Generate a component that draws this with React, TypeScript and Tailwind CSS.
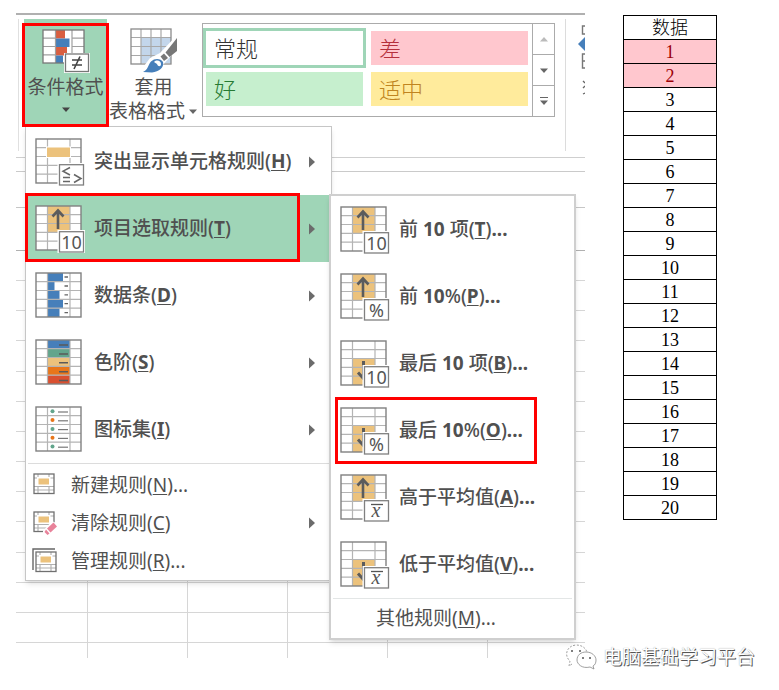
import type { ReactNode } from "react";

const GRAY = "#808080";
const LINE = "#b4b4b4";
const GOLD = "#ecc27c";

const Grid = ({ children, over }: { children?: ReactNode; over?: ReactNode }) => (
  <svg width="50" height="48" viewBox="0 0 50 48" className="shrink-0" aria-hidden="true">
    <rect x="1" y="1" width="45" height="44" fill="#fff" />
    {children}
    <path d="M12.5 1V45M35 1V45M1 9.7H46M1 18.5H46M1 27.3H46M1 36.2H46" stroke={LINE} strokeWidth="1.2" fill="none" />
    <rect x="1" y="1" width="45" height="44" fill="none" stroke={GRAY} strokeWidth="1.4" />
    {over}
  </svg>
);

const Badge = ({ children }: { children: ReactNode }) => (
  <>
    <rect x="22.5" y="25" width="27.5" height="23" fill="#fff" />
    <rect x="24.5" y="26.7" width="24" height="20.3" fill="#fff" stroke={GRAY} strokeWidth="1.3" />
    {children}
  </>
);

const BadgeText = ({ text }: { text: string }) =>
  text === "x" ? (
    <>
      <text x="36" y="43" fontSize="20" fontStyle="italic" textAnchor="middle" fill="#555" fontFamily="Liberation Serif, serif">
        x
      </text>
      <path d="M31 30.5H43" stroke="#555" strokeWidth="1.3" />
    </>
  ) : (
    <text x="36.5" y="43.5" fontSize="18" textAnchor="middle" fill="#555" fontFamily="Noto Sans, sans-serif">
      {text}
    </text>
  );

const RankIcon = ({ dir, text }: { dir: "up" | "down"; text: string }) => (
  <Grid
    over={
      <>
        {dir === "up" ? (
          <path d="M23 24V6M17.5 11.5L23 5.5L28.5 11.5" stroke="#5c5c5c" strokeWidth="2.6" fill="none" />
        ) : (
          <path d="M23.5 21V39M18 32.500L23.5 38.500L29 32.500" stroke="#5c5c5c" strokeWidth="3" fill="none" />
        )}
        <Badge>
          <BadgeText text={text} />
        </Badge>
      </>
    }
  >
    <rect x="12.5" y={dir === "up" ? 1 : 19} width="22.5" height="26" fill={GOLD} />
  </Grid>
);

const HighlightIcon = () => (
  <Grid
    over={
      <>
        <rect x="11" y="8.5" width="25" height="11.5" fill="#fff" />
        <rect x="12" y="9.5" width="23" height="9.5" fill={GOLD} />
        <Badge>
          <path d="M35 29.5L28 33.2L35 37M28 39.5H35M28 43.5H35M39 36.5L46 40.5L39 44.5" stroke="#666" strokeWidth="1.5" fill="none" />
        </Badge>
      </>
    }
  />
);

const DataBarIcon = () => (
  <Grid over={<path d="M29.5 5H33M29.5 14H33M29.5 22.8H33M29.5 31.7H33M29.5 40.6H33" stroke="#666" strokeWidth="1.3" />}>
    {[15.5, 7, 12, 15.5, 12].map((w, i) => (
      <rect key={i} x="12.5" y={1 + i * 8.8} width={w} height="8.8" fill="#467fba" />
    ))}
  </Grid>
);

const ColorScaleIcon = () => (
  <Grid over={<path d="M24 6H33M24 15H33M24 23.8H33M24 32.7H33M24 41.5H33" stroke="#5a5a5a" strokeWidth="1.6" />}>
    {["#467fba", "#62a58c", "#ecc27c", "#e8761a", "#d95030"].map((c, i) => (
      <rect key={c} x="12.5" y={1 + i * 8.8} width="22.5" height="8.8" fill={c} />
    ))}
  </Grid>
);

const IconSetIcon = () => (
  <Grid
    over={["#62a58c", "#e8761a", "#62a58c", "#e8761a", "#62a58c"].map((c, i) => (
      <g key={i}>
        <circle cx="17.5" cy={5.3 + i * 8.8} r="2" fill={c} />
        <path d={`M23 ${6 + i * 8.8}H33`} stroke="#777" strokeWidth="1.2" />
      </g>
    ))}
  />
);

const SmallIcon = ({ kind }: { kind: "new" | "clear" | "manage" }) => (
  <svg width="26" height="26" viewBox="0 0 26 26" className="shrink-0" aria-hidden="true">
    {kind === "manage" && <path d="M1 22V1H23" stroke="#666" strokeWidth="1.4" fill="none" />}
    <g transform={kind === "manage" ? "translate(2 2)" : undefined}>
      <path d="M6 2V22M17 2V22M2 6H22M2 14.5H22M2 18H22" stroke="#b0b0b0" strokeWidth="1.1" />
      <rect x="2" y="2" width="20" height="19.5" fill="none" stroke="#707070" strokeWidth="1.3" />
      <rect x="5" y="5" width="13.5" height="9" fill="#fff" />
      <rect x="6.5" y="6.5" width="10.5" height="6" fill={GOLD} />
    </g>
    {kind === "clear" && (
      <>
        <path d="M11 21L20 11L26 14L24 26H11Z" fill="#fff" />
        <path d="M15 18.5L21.5 12.5L25 16.5L18.5 22.5Z" fill="#e8829a" />
        <path d="M14 19.5L17.5 23.5L15.5 25L12.5 22Z" fill="#e8829a" />
      </>
    )}
  </svg>
);

const ConditionalIcon = () => (
  <svg width="48" height="46" viewBox="0 0 48 46" aria-hidden="true">
    <rect x="1" y="2" width="41" height="33" fill="#fff" />
    <rect x="14" y="2" width="9" height="8.5" fill="#d95f41" />
    <rect x="14" y="10.5" width="13.5" height="8.5" fill="#467fba" />
    <rect x="14" y="19" width="11" height="8.5" fill="#d95f41" />
    <rect x="14" y="27.5" width="7" height="7.5" fill="#467fba" />
    <path d="M13.5 2V35M30 2V35M1 10.2H14M1 18.5H14M1 26.8H14M30 10.2H42M30 18.5H42" stroke="#a0a0a0" strokeWidth="1.2" />
    <rect x="1" y="2" width="41" height="33" fill="none" stroke="#777" strokeWidth="1.3" />
    <rect x="22" y="25" width="26" height="20" fill="#fff" />
    <rect x="23.5" y="26" width="23" height="17.5" fill="#fff" stroke="#777" strokeWidth="1.3" />
    <path d="M30 32H40M30 37H40M38 28.5L32 41" stroke="#444" strokeWidth="1.6" />
  </svg>
);

const TableStyleIcon = () => (
  <svg width="48" height="46" viewBox="0 0 48 46" aria-hidden="true">
    <rect x="11" y="10" width="30" height="25" fill="#c3d6eb" />
    <path d="M11 1V36M21 1V36M31 1V36M1 9.5H41M1 18.5H41M1 27.5H41" stroke="#a8a8a8" strokeWidth="1.2" />
    <rect x="1" y="1" width="40" height="35" fill="none" stroke="#8a8a8a" strokeWidth="1.3" />
    <path d="M48 6V20L32 38L22 46H8L20 30L30 25Z" fill="#fff" />
    <path d="M47 10V23L39.5 29L35.5 24.5Z" fill="#777" />
    <path d="M34 25.5L38 30L34 33L30.5 28.5Z" fill="#777" />
    <path d="M13 44C18 42 18 37 21 33.5C25 29.5 31 30.5 33 34C34.5 39 29 44 22 44.5Z" fill="#467fba" />
    <path d="M24 34C27 31 31 33 31 36C31 39 28 39 27 36Z" fill="#fff" />
  </svg>
);

const Down = ({ color }: { color: string }) => (
  <svg width="8" height="5" viewBox="0 0 8 5" aria-hidden="true">
    <path d="M0 0.5H8L4 5Z" fill={color} />
  </svg>
);

const SubArrow = () => (
  <svg width="6" height="12" viewBox="0 0 6 12" className="mr-4 ml-auto" aria-hidden="true">
    <path d="M0 0.5V11.5L6 6Z" fill="#6b6b6b" />
  </svg>
);

type LabelProps = { text: string; hotkey: string; tail?: string; bold?: boolean };

const Label = ({ text, hotkey, tail = "", bold }: LabelProps) => (
  <span className={bold ? "font-medium" : ""}>
    {text.split(/(10)/).map((part, i) => (part === "10" ? <b key={i}>10</b> : part))}(
    <span className={bold ? "font-bold underline underline-offset-2" : "underline underline-offset-2"}>{hotkey}</span>)
    {tail && <span className={bold ? "font-bold" : ""}>{tail}</span>}
  </span>
);

const topBottomRules = [
  { text: "前 10 项", hotkey: "T", dir: "up", badge: "10" },
  { text: "前 10%", hotkey: "P", dir: "up", badge: "%" },
  { text: "最后 10 项", hotkey: "B", dir: "down", badge: "10" },
  { text: "最后 10%", hotkey: "O", dir: "down", badge: "%", marked: true },
  { text: "高于平均值", hotkey: "A", dir: "up", badge: "x" },
  { text: "低于平均值", hotkey: "V", dir: "down", badge: "x" },
] as const;

const ruleMenus = [
  { text: "突出显示单元格规则", hotkey: "H", icon: <HighlightIcon /> },
  { text: "项目选取规则", hotkey: "T", icon: <RankIcon dir="up" text="10" />, open: true },
  { text: "数据条", hotkey: "D", icon: <DataBarIcon /> },
  { text: "色阶", hotkey: "S", icon: <ColorScaleIcon /> },
  { text: "图标集", hotkey: "I", icon: <IconSetIcon /> },
];

const ruleActions = [
  { text: "新建规则", hotkey: "N", tail: "...", kind: "new" },
  { text: "清除规则", hotkey: "C", kind: "clear", sub: true },
  { text: "管理规则", hotkey: "R", tail: "...", kind: "manage" },
] as const;

const SubMenu = () => (
  <ul className="absolute -top-px left-[303px] z-10 w-[247px] border-2 border-[#cfcfcf] bg-white shadow-md">
    {topBottomRules.map((rule) => (
      <li key={rule.hotkey} className="relative">
        <button className="flex h-[67px] w-full items-center gap-[9px] pl-[9px] text-left">
          <RankIcon dir={rule.dir} text={rule.badge} />
          <Label text={rule.text} hotkey={rule.hotkey} tail="..." bold />
        </button>
        {"marked" in rule && <span className="pointer-events-none absolute inset-y-0 left-1 w-[202px] border-3 border-[#ff0000]" />}
      </li>
    ))}
    <li className="mx-0.5 border-t border-[#e3e6e6]">
      <button className="h-[39px] w-full pl-[43px] text-left">
        <Label text="其他规则" hotkey="M" tail="..." />
      </button>
    </li>
  </ul>
);

const Menu = () => (
  <ul className="absolute top-[113px] left-[9px] w-[307px] border border-[#c6c6c6] bg-white pt-px shadow-md">
    {ruleMenus.map((item) => (
      <li key={item.hotkey} className="relative">
        <button className={`flex h-[67px] w-full items-center gap-[9px] pl-[9px] text-left ${item.open ? "bg-[#9fd5b7]" : ""}`}>
          {item.icon}
          <Label text={item.text} hotkey={item.hotkey} bold />
          <SubArrow />
        </button>
        {item.open && (
          <>
            <span className="pointer-events-none absolute -top-0.5 bottom-0 -left-px w-[275px] border-3 border-[#ff0000]" />
            <SubMenu />
          </>
        )}
      </li>
    ))}
    <li className="mx-0.5 mb-0.5 border-t border-[#dcdcdc]" />
    {ruleActions.map((item) => (
      <li key={item.hotkey}>
        <button className="flex h-[38px] w-full items-center gap-[13px] pl-1.5 text-left">
          <SmallIcon kind={item.kind} />
          <Label text={item.text} hotkey={item.hotkey} tail={"tail" in item ? item.tail : ""} />
          {"sub" in item && <SubArrow />}
        </button>
      </li>
    ))}
  </ul>
);

const Ribbon = () => (
  <div className="flex h-[145px] items-start overflow-hidden border-t-2 border-b border-t-[#b0b0b0] border-b-[#cfcfcf]">
    <div className="mt-1 ml-0.5 h-[132px] border-l border-[#e0e0e0]" />
    <button className="relative z-20 mt-1 ml-[5px] flex h-[107px] w-[83px] flex-col items-center bg-[#9fd5b7] pt-[9px]">
      <ConditionalIcon />
      <span className="mt-px leading-6">条件格式</span>
      <span className="mt-2">
        <Down color="#444" />
      </span>
      <span className="absolute top-1 -right-0.5 -bottom-px -left-0.5 border-3 border-[#ff0000]" />
    </button>
    <button className="mt-1 ml-0.5 flex w-[93px] flex-col items-center pt-[9px]">
      <span className="flex flex-col items-center pr-1">
        <TableStyleIcon />
        <span className="mt-px leading-6">套用</span>
      </span>
      <span className="flex w-full items-center gap-1 leading-6">
        表格格式
        <Down color="#666" />
      </span>
    </button>
    <div className="mt-2 flex h-[94px] min-w-0 flex-1 border border-[#ababab]">
      <div className="grid flex-1 grid-cols-2 grid-rows-[34px_34px] gap-x-2 gap-y-[7px] pt-[7px] pr-1 pl-[3px] text-[22px] leading-[30px] font-light [&>button]:pl-2 [&>button]:text-left">
        <button className="bg-white text-[#333] outline-3 outline-[#9fd5b7]">常规</button>
        <button className="bg-[#ffc7ce] text-[#b5303c]">差</button>
        <button className="bg-[#c6efce] text-[#267a32]">好</button>
        <button className="bg-[#ffeb9c] text-[#c08420]">适中</button>
      </div>
      <div className="flex w-[22px] flex-col divide-y divide-[#ababab] border-l border-[#ababab]">
        <button aria-label="上一行" className="flex flex-1 items-center justify-center">
          <span className="rotate-180">
            <Down color="#bbb" />
          </span>
        </button>
        <button aria-label="下一行" className="flex flex-1 items-center justify-center">
          <Down color="#666" />
        </button>
        <button aria-label="更多样式" className="flex flex-1 flex-col items-center justify-center gap-0.5">
          <span className="w-2 border-t border-[#666]" />
          <Down color="#666" />
        </button>
      </div>
    </div>
    <div className="mt-1 ml-2.5 h-[132px] border-l border-[#dcdcdc]" />
    <svg width="7" height="76" viewBox="0 0 7 76" className="mt-[9px] ml-3 shrink-0" aria-hidden="true">
      <path d="M8 2H4.5V10H8M8 30H4.5V44H8M4.5 37H8" stroke="#777" strokeWidth="1.4" fill="none" />
      <path d="M0 20L7 13V27Z" fill="#467fba" />
      <path d="M5 57L7 59M5 64L7 62M5 70L7 69" stroke="#666" strokeWidth="1.3" />
    </svg>
  </div>
);

const SheetRow = ({ size }: { size: string }) => (
  <div className={`grid grid-cols-[72px_repeat(4,100px)_1fr] divide-x divide-[#d6d6d6] ${size}`}>
    {[0, 1, 2, 3, 4, 5].map((c) => (
      <span key={c} />
    ))}
  </div>
);

const Sheet = () => (
  <div>
    <div className="h-3.5 border-b border-[#cacaca]" />
    <div className="h-9 border-b border-[#c6c6c6]" />
    <div className="h-[43px] border-b border-[#b0b0b0]" />
    <div className="flex h-[392px] flex-col">
      {Array.from({ length: 13 }, (_, i) => (
        <SheetRow key={i} size="flex-1 border-b border-[#d6d6d6]" />
      ))}
    </div>
    <SheetRow size="h-[15px]" />
  </div>
);

const DataTable = () => (
  <table className="w-[94px] border-collapse text-center font-['Liberation_Serif','Noto_Sans_CJK_SC',serif] text-lg leading-[21px] text-black">
    <thead>
      <tr>
        <th className="h-6 border border-black p-0 pt-0.5 font-light">数据</th>
      </tr>
    </thead>
    <tbody>
      {Array.from({ length: 20 }, (_, i) => i + 1).map((n) => (
        <tr key={n} className={n <= 2 ? "bg-[#ffc7ce] text-[#9c0006]" : ""}>
          <td className="h-6 border border-black p-0 pt-0.5">{n}</td>
        </tr>
      ))}
    </tbody>
  </table>
);

const Watermark = () => (
  <footer className="absolute right-6 bottom-5 flex items-center gap-1.5 text-[19px] leading-6 text-white [text-shadow:1px_1px_0_#555,0_0_1px_#999]">
    <svg width="32" height="26" viewBox="0 0 32 26" fill="#fff" stroke="#888" strokeWidth="0.8" aria-hidden="true">
      <path d="M7 20L4 22L5 17C-1 12 1 2 11 1C18 1 21 5 22 8" strokeDasharray="2 1.5" />
      <path d="M21 8C27 8 31 12 31 16C31 19 30 21 28 22L29 25L25 23C17 25 12 20 12 16C12 11 16 8 21 8Z" />
      <g fill="#555" stroke="none">
        <circle cx="7" cy="7" r="1" />
        <circle cx="15" cy="7" r="1" />
        <circle cx="18" cy="14" r="1" />
        <circle cx="25" cy="14" r="1" />
      </g>
    </svg>
    电脑基础学习平台
  </footer>
);

const App = () => {
  return (
    <div className="relative bg-white pb-8 font-['Noto_Sans','Noto_Sans_CJK_SC',sans-serif] text-[19px] text-[#505050]">
      <main className="flex items-start">
        <section className="relative mt-[13px] ml-4 min-w-0 flex-1">
          <Ribbon />
          <Sheet />
          <Menu />
        </section>
        <aside className="mt-[15px] w-[194px] shrink-0 pl-[38px]">
          <DataTable />
        </aside>
      </main>
      <Watermark />
    </div>
  );
};

export default App;
